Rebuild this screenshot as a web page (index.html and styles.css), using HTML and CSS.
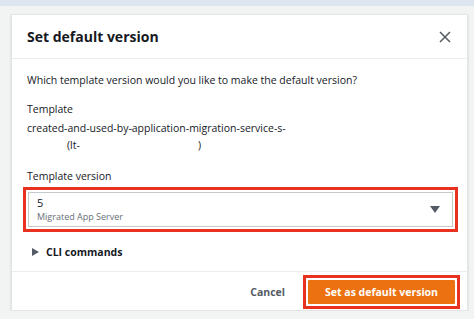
FILE: index.html
```html
<!DOCTYPE html>
<html lang="en">
<head>
    <meta charset="UTF-8">
    <meta name="viewport" content="width=device-width, initial-scale=1.0">
    <title>Set default version</title>
    <link rel="stylesheet" href="styles.css">
</head>
<body>
    <div class="topbar"></div>

    <div class="backdrop">
        <div class="modal">
            <div class="modal-header">
                <h2>Set default version</h2>
                <svg class="close" width="12" height="12" viewBox="0 0 12 12">
                    <path d="M1 1 L11 11 M11 1 L1 11" stroke="#545b64" stroke-width="1.5" fill="none"/>
                </svg>
            </div>

            <div class="modal-body">
                <p class="question">Which template version would you like to make the default version?</p>

                <div class="field">
                    <div class="label">Template</div>
                    <div class="value">created-and-used-by-application-migration-service-s-</div>
                    <div class="value indent">(lt-<span class="redacted"></span>)</div>
                </div>

                <div class="field version">
                    <div class="label">Template version</div>
                    <div class="highlight">
                        <div class="select">
                            <div>
                                <div class="select-main">5</div>
                                <div class="select-sub">Migrated App Server</div>
                            </div>
                            <svg width="10" height="7" viewBox="0 0 10 7">
                                <path d="M0 0 L10 0 L5 7 Z" fill="#545b64"/>
                            </svg>
                        </div>
                    </div>
                </div>

                <div class="expander">
                    <svg width="7" height="8" viewBox="0 0 7 8">
                        <path d="M0 0 L7 4 L0 8 Z" fill="#545b64"/>
                    </svg>
                    <span>CLI commands</span>
                </div>
            </div>

            <div class="modal-footer">
                <button class="link-btn">Cancel</button>
                <div class="highlight">
                    <button class="primary">Set as default version</button>
                </div>
            </div>
        </div>
    </div>
</body>
</html>
```

FILE: styles.css
```css
body {
    margin: 0;
    font-family: "Open Sans", Arial, sans-serif;
    background-color: #f2f3f3;
    color: #16191f;
}
.topbar {
    height: 6px;
    background-color: #dde6ee;
}
.backdrop {
    padding: 8px 6px 0 11px;
}
.modal {
    background-color: white;
    border: 1px solid #e3e5e5;
    box-shadow: 0 1px 2px rgba(0,0,0,0.15);
}
.modal-header {
    display: flex;
    justify-content: space-between;
    align-items: center;
    height: 43px;
    padding: 0 16px 0 15px;
    border-bottom: 1px solid #eaeded;
}
.modal-header h2 {
    margin: 0;
    font-size: 14px;
    font-weight: 700;
}
.modal-body {
    padding: 14px 15px 0 15px;
}
.question {
    margin: 0 0 14px 0;
    font-size: 10.5px;
}
.field {
    margin-bottom: 14px;
}
.field.version {
    margin-bottom: 11px;
}
.label {
    font-size: 10.5px;
    line-height: 16px;
    margin-bottom: 3px;
}
.value {
    font-size: 10.5px;
    line-height: 17px;
}
.indent {
    padding-left: 40px;
}
.redacted {
    display: inline-block;
    width: 118px;
}
.highlight {
    border: 3px solid #e8321f;
    padding: 2px;
}
.field .highlight {
    margin-left: -4px;
    margin-right: -6px;
}
.select {
    display: flex;
    justify-content: space-between;
    align-items: center;
    border: 1px solid #c6c9cc;
    padding: 2px 12px 3px 8px;
}
.select-main {
    font-size: 11px;
    line-height: 15px;
}
.select-sub {
    font-size: 9px;
    line-height: 13px;
    color: #687078;
}
.expander {
    display: flex;
    align-items: center;
    gap: 7px;
    padding: 2px 0 12px 5px;
    font-size: 10.5px;
    font-weight: 700;
    color: #16191f;
}
.modal-footer {
    display: flex;
    justify-content: flex-end;
    align-items: center;
    gap: 8px;
    border-top: 1px solid #eaeded;
    padding: 3px 7px 1px 0;
}
.link-btn {
    background: none;
    border: none;
    font-family: inherit;
    font-size: 10.5px;
    font-weight: 700;
    color: #545b64;
    padding: 4px 10px;
}
.primary {
    display: block;
    background-color: #ec7211;
    border: 1px solid #ec7211;
    color: white;
    font-family: inherit;
    font-size: 10.5px;
    font-weight: 700;
    padding: 4px 16px;
    border-radius: 1px;
}
```
